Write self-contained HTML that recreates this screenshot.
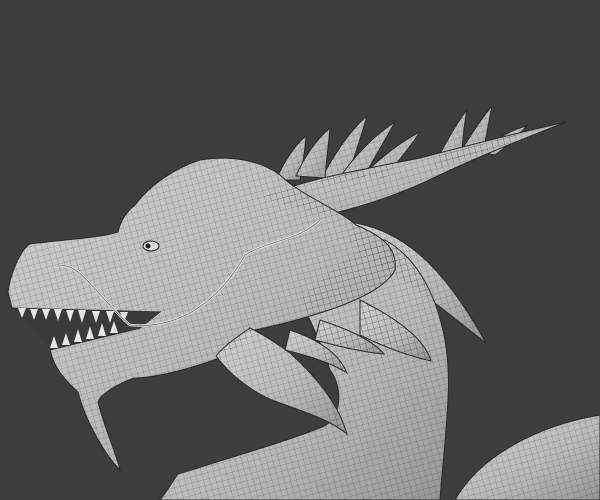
<!DOCTYPE html>
<html><head><meta charset="utf-8"><style>
html,body{margin:0;padding:0;background:#3d3d3d;width:600px;height:500px;overflow:hidden}
svg{display:block}
</style></head><body>
<svg width="600" height="500" viewBox="0 0 600 500" xmlns="http://www.w3.org/2000/svg">
<defs>
<linearGradient id="g" x1="0" y1="0" x2="1" y2="1">
<stop offset="0" stop-color="#d0d0d0"/><stop offset="0.6" stop-color="#b8b8b8"/><stop offset="1" stop-color="#959595"/>
</linearGradient>
<pattern id="grid" width="6" height="6" patternUnits="userSpaceOnUse" patternTransform="rotate(-15)">
<path d="M0 0H6M0 0V6" stroke="#333" stroke-width="0.5" fill="none" opacity="0.6"/>
</pattern>
<g id="shapes">
<!-- right body -->
<path d="M455 500 C480 455 540 425 600 415 L600 500 Z"/>
<!-- back horn -->
<path d="M350 222 C400 230 440 260 486 343 C450 315 420 290 395 275 C375 262 360 250 350 240 Z"/>
<!-- antler branches -->
<path d="M432 168 C445 145 455 125 467 110 C463 130 462 150 462 162 Z"/>
<path d="M455 160 C468 140 480 120 492 106 C488 125 485 145 482 155 Z"/>
<path d="M480 152 C495 140 510 130 527 126 C515 138 505 148 495 155 Z"/>
<path d="M318 186 C330 160 350 130 367 116 C360 140 352 165 345 182 Z"/>
<path d="M338 180 C355 155 375 135 395 122 C385 140 372 162 362 180 Z"/>
<path d="M360 178 C380 158 400 142 420 132 C408 150 395 165 385 178 Z"/>
<path d="M276 180 C285 160 295 145 306 136 C305 152 302 168 300 180 Z"/>
<path d="M296 176 C305 155 318 138 330 128 C328 148 326 165 325 178 Z"/>
<!-- main antler -->
<path d="M262 198 C300 180 360 170 420 158 C470 145 520 132 566 122 C520 140 470 160 425 182 C390 198 350 210 325 215 Z"/>
<!-- neck -->
<path d="M300 300 C340 260 370 240 385 240 C430 265 452 330 448 400 C446 440 442 470 440 500 L160 500 C168 490 172 482 178 474 C230 458 290 440 322 427 C340 420 345 390 330 370 C320 340 310 320 300 300 Z"/>
<!-- head -->
<path d="M8 292 C10 275 20 250 30 244 C60 240 100 238 118 232 C120 222 126 212 135 205 C150 185 175 168 200 160 C230 155 260 160 280 175 C300 195 340 210 356 225 C380 235 398 247 395 270 C380 300 300 320 255 330 C240 345 230 355 214 360 C180 372 150 378 134 378 C115 385 100 395 98 402 C105 430 115 450 120 470 C105 455 85 420 78 392 C65 380 55 370 50 350 L140 328 L160 312 L12 308 Z"/>
<!-- collar with big spike -->
<path d="M250 328 C235 338 222 348 216 356 C230 375 255 395 280 403 C305 412 330 420 347 434 C340 410 325 385 290 353 C275 342 262 334 250 328 Z"/>
<!-- spikes -->
<path d="M290 330 C320 340 340 355 347 373 C330 362 305 355 285 350 Z"/>
<path d="M320 320 C350 330 372 340 384 354 C360 352 335 345 315 340 Z"/>
<path d="M360 300 C400 320 425 340 431 361 C405 355 380 345 360 335 Z"/>
</g>
</defs>
<g fill="url(#g)" stroke="#2a2a2a" stroke-width="1"><use href="#shapes"/></g>
<g fill="url(#grid)"><use href="#shapes"/></g>
<!-- mouth interior -->
<path d="M14 308 L160 312 L140 328 L48 348 Z" fill="#3a3a3a"/>
<g fill="#e6e6e6">
<path d="M18 308 l4 10 l4 -10z M30 309 l4 11 l4 -11z M42 309 l4 11 l4 -11z M54 309 l4 12 l4 -12z M66 310 l4 12 l4 -12z M78 310 l4 13 l4 -13z M92 311 l4 12 l4 -12z M106 311 l4 12 l4 -12z M120 312 l4 10 l4 -10z"/>
<path d="M50 348 l4 -12 l4 12z M62 345 l4 -12 l4 12z M74 342 l4 -13 l4 13z M86 339 l4 -13 l4 13z M98 336 l4 -13 l4 13z M110 333 l4 -12 l4 12z"/>
</g>
<!-- whisker -->
<path d="M60 266 C80 262 100 300 130 325 C180 330 220 300 245 255 C270 240 300 240 320 220" fill="none" stroke="#e0e0e0" stroke-width="2.5"/>
<path d="M60 266 C80 262 100 300 130 325 C180 330 220 300 245 255 C270 240 300 240 320 220" fill="none" stroke="#555" stroke-width="0.6"/>
<!-- eye -->
<ellipse cx="151" cy="246" rx="8" ry="5" fill="#ddd" stroke="#222"/>
<circle cx="148" cy="246" r="2.5" fill="#222"/>
</svg>
</body></html>
